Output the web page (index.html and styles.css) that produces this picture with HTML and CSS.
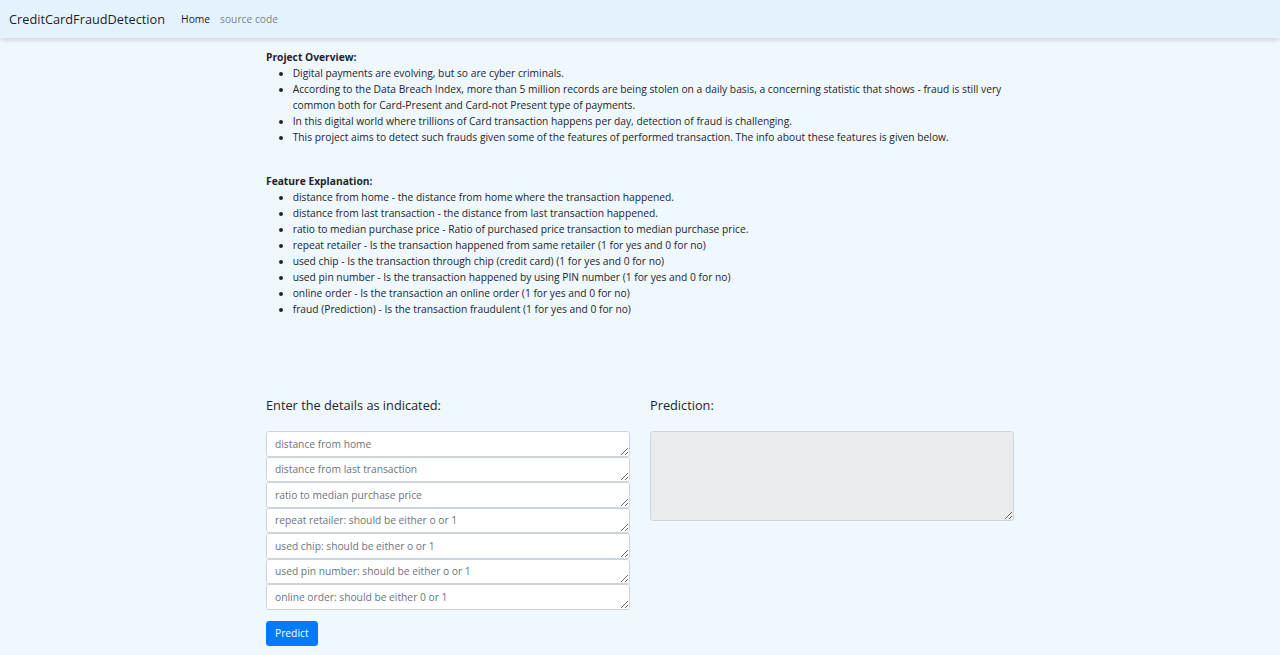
FILE: index.html
```html
<!DOCTYPE html>
<html lang="en">
<head>
    <meta charset="UTF-8">
    <meta name="viewport" content="width=device-width, initial-scale=1.0">
    <title>CreditCardFraudDetection</title>
    <link rel="stylesheet" href="styles.css">
</head>
<body>
    <nav class="navbar">
        <a class="brand" href="#">CreditCardFraudDetection</a>
        <a class="nav-link active" href="#">Home</a>
        <a class="nav-link" href="#">source code</a>
    </nav>

    <div class="container">
        <div class="info">
            <b>Project Overview:</b>
            <ul>
                <li>Digital payments are evolving, but so are cyber criminals.</li>
                <li>According to the Data Breach Index, more than 5 million records are being stolen on a daily basis, a concerning statistic that shows - fraud is still very common both for Card-Present and Card-not Present type of payments.</li>
                <li>In this digital world where trillions of Card transaction happens per day, detection of fraud is challenging.</li>
                <li>This project aims to detect such frauds given some of the features of performed transaction. The info about these features is given below.</li>
            </ul>
        </div>

        <div class="info">
            <b>Feature Explanation:</b>
            <ul>
                <li>distance from home - the distance from home where the transaction happened.</li>
                <li>distance from last transaction - the distance from last transaction happened.</li>
                <li>ratio to median purchase price - Ratio of purchased price transaction to median purchase price.</li>
                <li>repeat retailer - Is the transaction happened from same retailer (1 for yes and 0 for no)</li>
                <li>used chip - Is the transaction through chip (credit card) (1 for yes and 0 for no)</li>
                <li>used pin number - Is the transaction happened by using PIN number (1 for yes and 0 for no)</li>
                <li>online order - Is the transaction an online order (1 for yes and 0 for no)</li>
                <li>fraud (Prediction) - Is the transaction fraudulent (1 for yes and 0 for no)</li>
            </ul>
        </div>

        <div class="row">
            <div class="col">
                <h5>Enter the details as indicated:</h5>
                <form>
                    <textarea class="form-control" rows="1" placeholder="distance from home"></textarea>
                    <textarea class="form-control" rows="1" placeholder="distance from last transaction"></textarea>
                    <textarea class="form-control" rows="1" placeholder="ratio to median purchase price"></textarea>
                    <textarea class="form-control" rows="1" placeholder="repeat retailer: should be either o or 1"></textarea>
                    <textarea class="form-control" rows="1" placeholder="used chip: should be either o or 1"></textarea>
                    <textarea class="form-control" rows="1" placeholder="used pin number: should be either o or 1"></textarea>
                    <textarea class="form-control" rows="1" placeholder="online order: should be either 0 or 1"></textarea>
                    <button type="button" class="btn">Predict</button>
                </form>
            </div>
            <div class="col">
                <h5>Prediction:</h5>
                <textarea class="form-control result" readonly></textarea>
            </div>
        </div>
    </div>
</body>
</html>
```
FILE: styles.css
```css
body {
    margin: 0;
    font-family: "Segoe UI", "Open Sans", sans-serif;
    font-size: 10.25px;
    line-height: 16px;
    color: #212529;
    background: #f0f8ff;
}
.navbar {
    display: flex;
    align-items: center;
    height: 38px;
    padding: 0 10px 0 9px;
    background: #e3f2fd;
    box-shadow: 0 2px 5px rgba(0, 0, 0, 0.15);
}
.brand {
    font-size: 12.75px;
    color: rgba(0, 0, 0, 0.9);
    text-decoration: none;
    margin-right: 11px;
}
.nav-link {
    color: rgba(0, 0, 0, 0.5);
    text-decoration: none;
    padding: 0 5px;
}
.nav-link.active {
    color: rgba(0, 0, 0, 0.9);
}
.container {
    width: 748px;
    margin: 0 auto;
    padding-top: 11px;
}
.info ul {
    margin: 0 0 28px 0;
    padding-left: 26.7px;
}
.row {
    display: flex;
    gap: 20px;
    margin-top: 80px;
}
.col {
    flex: 1;
}
h5 {
    font-size: 12.75px;
    font-weight: 400;
    line-height: 16px;
    margin: 0 0 18px 0;
}
.form-control {
    display: block;
    box-sizing: border-box;
    width: 100%;
    height: 25.5px;
    margin: 0;
    padding: 3.5px 8px 3px;
    font-family: inherit;
    font-size: 10.25px;
    line-height: 16px;
    color: #495057;
    background: white;
    border: 1px solid #ced4da;
    border-radius: 2.7px;
}
.form-control::placeholder {
    color: #6c757d;
}
.result {
    height: 90px;
    background: #e9ecef;
}
.btn {
    display: block;
    box-sizing: border-box;
    margin-top: 11px;
    padding: 0 8px;
    height: 25.5px;
    font-family: inherit;
    font-size: 10.25px;
    line-height: 16px;
    color: white;
    background: #007bff;
    border: 1px solid #007bff;
    border-radius: 2.7px;
    cursor: pointer;
}
```
